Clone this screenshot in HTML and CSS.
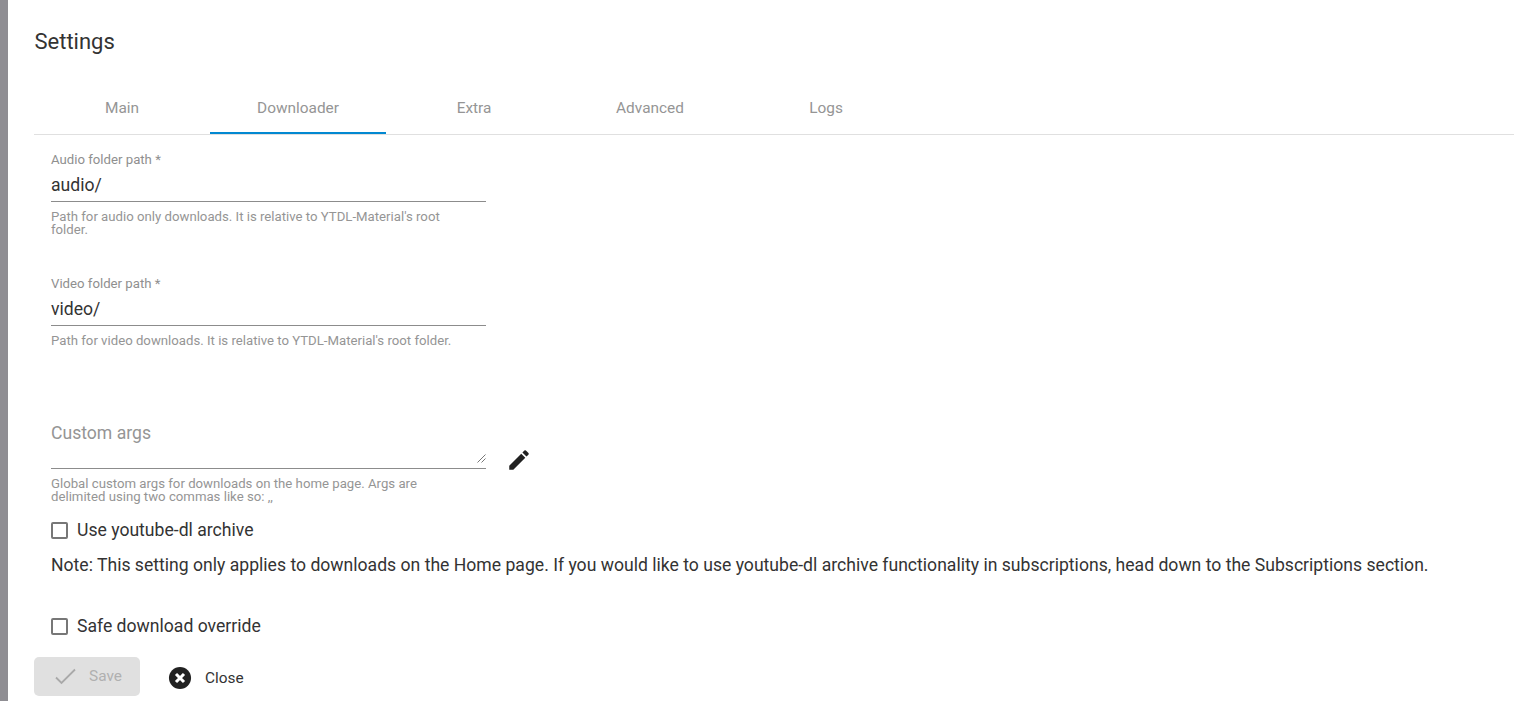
FILE: index.html
```html
<!DOCTYPE html>
<html lang="en">
<head>
    <meta charset="UTF-8">
    <meta name="viewport" content="width=device-width, initial-scale=1.0">
    <title>Settings</title>
    <link rel="stylesheet" href="styles.css">
</head>
<body>

    <div class="dialog">
        <h2 class="dialog-title">Settings</h2>

        <div class="tabs">
            <div class="tab">Main</div>
            <div class="tab active">Downloader</div>
            <div class="tab">Extra</div>
            <div class="tab">Advanced</div>
            <div class="tab">Logs</div>
        </div>

        <div class="content">
            <div class="field field-audio">
                <label class="field-label">Audio folder path *</label>
                <div class="field-value">audio/</div>
                <div class="field-hint">Path for audio only downloads. It is relative to YTDL-Material's root folder.</div>
            </div>

            <div class="field field-video">
                <label class="field-label">Video folder path *</label>
                <div class="field-value">video/</div>
                <div class="field-hint">Path for video downloads. It is relative to YTDL-Material's root folder.</div>
            </div>

            <div class="args-row">
                <div class="field field-args">
                    <div class="args-box">
                        <span class="args-placeholder">Custom args</span>
                        <svg class="resize-grip" width="9" height="9" viewBox="0 0 9 9">
                            <path d="M0.5 8.5L8.5 0.5M4.5 8.5L8.5 4.5" stroke="#555" stroke-width="0.8" fill="none"/>
                        </svg>
                    </div>
                    <div class="field-hint args-hint">Global custom args for downloads on the home page. Args are delimited using two commas like so: ,,</div>
                </div>
                <svg class="edit-icon" width="26" height="26" viewBox="0 0 24 24">
                    <path d="M3 17.25V21h3.75L17.81 9.94l-3.75-3.75L3 17.25zM20.71 7.04a1 1 0 0 0 0-1.41l-2.34-2.34a1 1 0 0 0-1.41 0l-1.83 1.83 3.75 3.75 1.83-1.83z" fill="#212121"/>
                </svg>
            </div>

            <label class="check-row check-archive">
                <span class="check-box"></span>
                <span>Use youtube-dl archive</span>
            </label>
            <p class="note">Note: This setting only applies to downloads on the Home page. If you would like to use youtube-dl archive functionality in subscriptions, head down to the Subscriptions section.</p>

            <label class="check-row check-safe">
                <span class="check-box"></span>
                <span>Safe download override</span>
            </label>
        </div>

        <div class="actions">
            <button type="button" class="btn-save" disabled>
                <svg width="24" height="24" viewBox="0 0 24 24">
                    <path d="M2 13.5L7.5 19L21 5.5" stroke="#a9a9a9" stroke-width="1.8" fill="none"/>
                </svg>
                <span>Save</span>
            </button>
            <button type="button" class="btn-close">
                <svg width="26" height="26" viewBox="0 0 24 24">
                    <circle cx="12" cy="12" r="10.2" fill="#212121"/>
                    <path d="M8.3 8.3L15.7 15.7M15.7 8.3L8.3 15.7" stroke="#fff" stroke-width="2.8" fill="none"/>
                </svg>
                <span>Close</span>
            </button>
        </div>
    </div>

</body>
</html>
```

FILE: styles.css
```css
html, body {
    height: 100%;
}

body {
    margin: 0;
    background-color: #8f8e93;
    font-family: Roboto, sans-serif;
    color: #333;
    overflow: hidden;
}

.dialog {
    box-sizing: border-box;
    height: 701px;
    margin-left: 8px;
    padding-left: 26px;
    background-color: #fff;
}

.dialog-title {
    margin: 0;
    padding: 29px 0 0 0.5px;
    height: 53px;
    font-size: 22px;
    line-height: 26px;
    font-weight: 400;
}

.tabs {
    display: flex;
    height: 52px;
    border-bottom: 1px solid #e0e0e0;
}

.tab {
    box-sizing: border-box;
    width: 176px;
    height: 52px;
    line-height: 52px;
    text-align: center;
    font-size: 15.4px;
    color: #959595;
}

.tab.active {
    border-bottom: 2px solid #0288d1;
}

.content {
    padding-left: 17px;
}

.field {
    width: 435px;
}

.field-audio {
    padding-top: 16px;
}

.field-video {
    padding-top: 39px;
}

.field-label {
    display: block;
    height: 19px;
    font-size: 13.2px;
    line-height: 18px;
    color: #8f8f8f;
}

.field-value {
    box-sizing: border-box;
    height: 32px;
    padding-top: 3px;
    font-size: 17.6px;
    line-height: 24px;
    border-bottom: 1px solid #8c8c8c;
}

.field-hint {
    width: 410px;
    margin-top: 8px;
    font-size: 13.2px;
    line-height: 13.2px;
    color: #959595;
}

.args-hint {
    height: 27px;
    margin-bottom: 1px;
    overflow: hidden;
}

.args-row {
    display: flex;
    align-items: flex-start;
    padding-top: 71px;
}

.args-box {
    position: relative;
    box-sizing: border-box;
    height: 50px;
    padding-top: 2px;
    font-size: 17.6px;
    line-height: 24px;
    border-bottom: 1px solid #8c8c8c;
}

.args-placeholder {
    color: #959595;
}

.resize-grip {
    position: absolute;
    right: 0;
    bottom: 5px;
}

.edit-icon {
    margin: 28px 0 0 20px;
}

.check-row {
    display: flex;
    align-items: center;
    gap: 9px;
    height: 24px;
    font-size: 17.6px;
}

.check-archive {
    margin-top: 13px;
}

.check-safe {
    margin-top: 37px;
}

.check-box {
    box-sizing: border-box;
    width: 17px;
    height: 17px;
    margin-top: 1px;
    border: 2px solid #777;
    border-radius: 2px;
}

.note {
    margin: 11px 0 0;
    font-size: 17.6px;
    line-height: 24px;
}

.actions {
    display: flex;
    align-items: center;
    gap: 27px;
    margin-top: 19px;
}

.btn-save,
.btn-close {
    display: flex;
    align-items: center;
    border: none;
    padding: 0;
    background: none;
    font-family: Roboto, sans-serif;
    font-size: 15.4px;
}

.btn-save {
    width: 106px;
    height: 39px;
    padding-left: 20px;
    gap: 11px;
    background-color: #e0e0e0;
    color: #b0b0b0;
    border-radius: 5px;
}

.btn-close {
    gap: 12px;
    padding-top: 3px;
    color: #333;
}
```
